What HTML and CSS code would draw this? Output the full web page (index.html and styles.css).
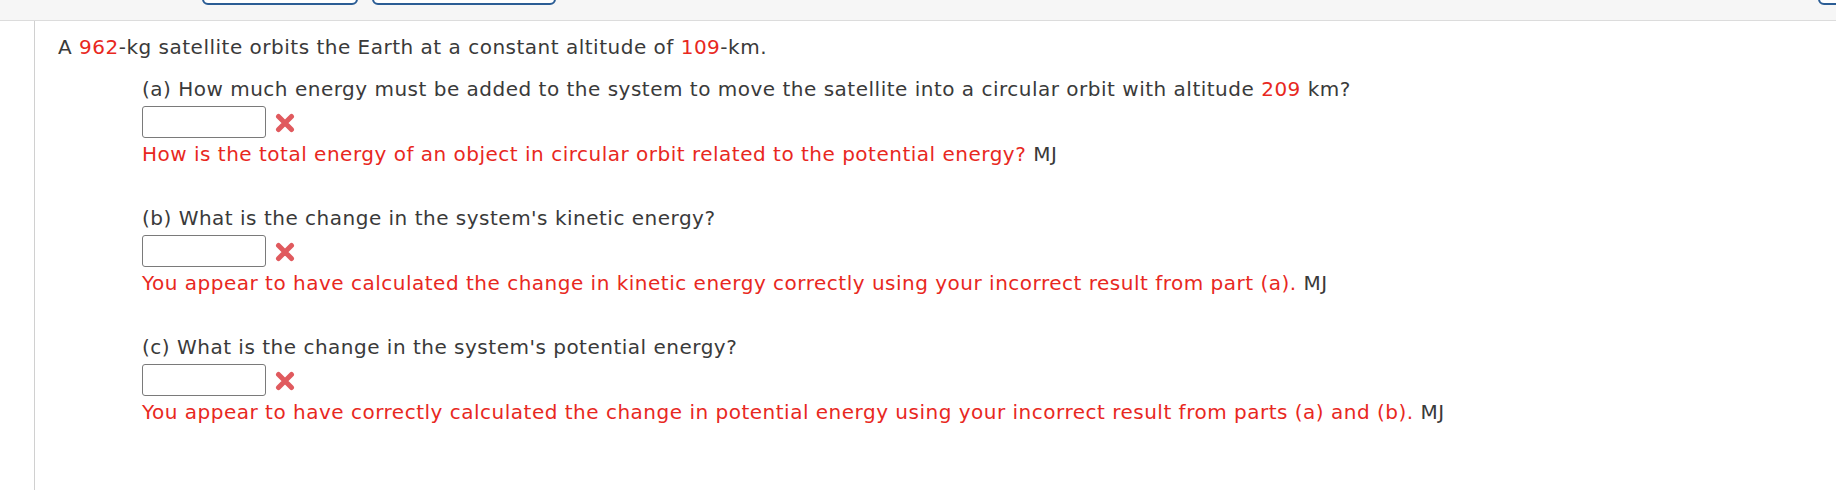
FILE: index.html
```html
<!DOCTYPE html>
<html>
<head>
<meta charset="utf-8">
<link rel="stylesheet" href="styles.css">
</head>
<body>
<div class="topbar">
  <div class="btn btn1"></div>
  <div class="btn btn2"></div>
  <div class="spacer"></div>
  <div class="btn btn3"></div>
</div>
<div class="content">
  <div class="rule"></div>
  <div class="main">
    <p class="intro">A <span class="red">962</span>-kg satellite orbits the Earth at a constant altitude of <span class="red">109</span>-km.</p>
    <div class="part">
      <p class="q">(a) How much energy must be added to the system to move the satellite into a circular orbit with altitude <span class="red">209</span> km?</p>
      <div class="answer">
        <div class="box"></div>
        <svg class="wrong" width="22" height="20" viewBox="0 0 22 20"><path d="M4.5 3.5 L17.5 16.5 M17.5 3.5 L4.5 16.5" stroke="#e05a5e" stroke-width="5" stroke-linecap="round"/></svg>
      </div>
      <p class="hint"><span class="red">How is the total energy of an object in circular orbit related to the potential energy?</span> MJ</p>
    </div>
    <div class="part">
      <p class="q">(b) What is the change in the system's kinetic energy?</p>
      <div class="answer">
        <div class="box"></div>
        <svg class="wrong" width="22" height="20" viewBox="0 0 22 20"><path d="M4.5 3.5 L17.5 16.5 M17.5 3.5 L4.5 16.5" stroke="#e05a5e" stroke-width="5" stroke-linecap="round"/></svg>
      </div>
      <p class="hint"><span class="red">You appear to have calculated the change in kinetic energy correctly using your incorrect result from part (a).</span> MJ</p>
    </div>
    <div class="part">
      <p class="q">(c) What is the change in the system's potential energy?</p>
      <div class="answer">
        <div class="box"></div>
        <svg class="wrong" width="22" height="20" viewBox="0 0 22 20"><path d="M4.5 3.5 L17.5 16.5 M17.5 3.5 L4.5 16.5" stroke="#e05a5e" stroke-width="5" stroke-linecap="round"/></svg>
      </div>
      <p class="hint"><span class="red">You appear to have correctly calculated the change in potential energy using your incorrect result from parts (a) and (b).</span> MJ</p>
    </div>
  </div>
</div>
</body>
</html>
```
FILE: styles.css
```css
html, body {
  margin: 0;
  padding: 0;
  background: #fff;
}
body {
  width: 1836px;
  height: 490px;
  overflow: hidden;
  font-family: "DejaVu Sans", Verdana, sans-serif;
  font-size: 20px;
  letter-spacing: 0.5px;
  line-height: 26px;
  color: #3a3a3a;
}
.topbar {
  height: 20px;
  background: #f6f6f6;
  border-bottom: 1px solid #dcdcdc;
  display: flex;
  overflow: hidden;
  padding-left: 202px;
}
.btn {
  height: 34px;
  margin-top: -29px;
  border: 2px solid #2b5d95;
  border-radius: 6px;
  box-sizing: border-box;
  background: #fff;
}
.btn1 { width: 156px; }
.btn2 { width: 184px; margin-left: 14px; }
.spacer { flex: 1; }
.btn3 { width: 40px; margin-right: -22px; }
.content {
  display: flex;
  height: 469px;
}
.rule {
  width: 34px;
  border-right: 1px solid #d0d0d0;
  flex: none;
}
.main {
  padding-left: 23px;
  padding-top: 13px;
}
p { margin: 0; }
.red { color: #e8281e; }
.part {
  margin-left: 84px;
  margin-top: 16px;
}
.part + .part { margin-top: 38px; }
.answer {
  display: flex;
  align-items: center;
  margin-top: 4px;
  height: 32px;
}
.box {
  width: 124px;
  height: 32px;
  box-sizing: border-box;
  border: 1px solid #7a7a7a;
  border-radius: 3px;
  background: #fff;
}
.wrong {
  margin-left: 8px;
  margin-top: 2px;
  filter: blur(0.4px);
}
.hint { margin-top: 3px; }
```
